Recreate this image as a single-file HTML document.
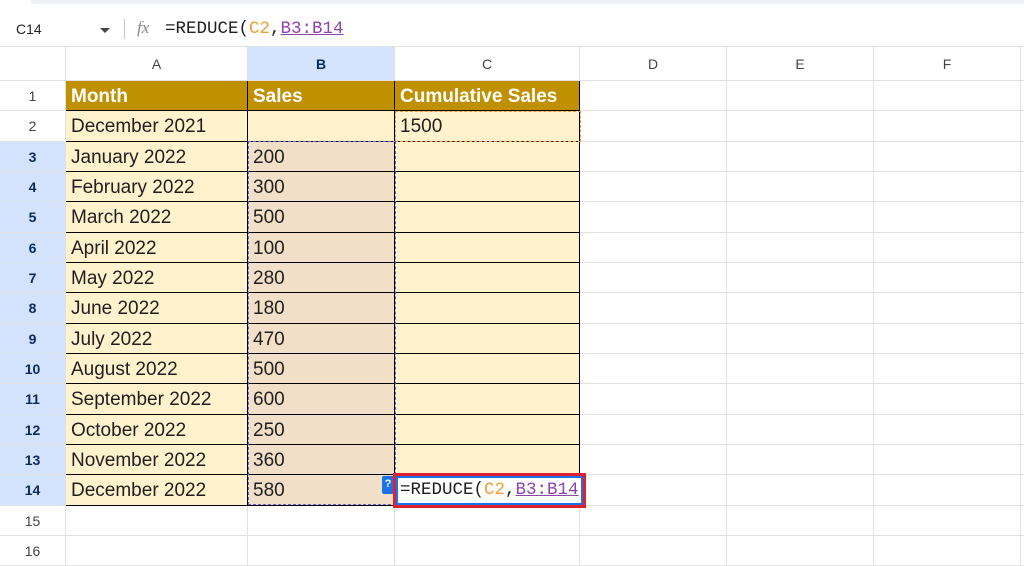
<!DOCTYPE html>
<html><head><meta charset="utf-8"><style>
body{margin:0;width:1024px;height:565px;overflow:hidden;background:#fff;font-family:"Liberation Sans",sans-serif;position:relative}
.topbar{position:absolute;left:30px;top:-8px;width:1000px;height:12px;background:#edf0f4;border-radius:8px}
.fb{position:absolute;top:14px;left:0;width:1024px;height:32px;border-bottom:1px solid #c7c7c7}
table{position:absolute;left:-1px;top:46px;border-collapse:collapse;table-layout:fixed;width:1034px}
td{border:1px solid #e1e1e1;padding:2px 0 0 5px;font-size:19px;color:#1f1f1f;white-space:nowrap;overflow:hidden}
td.rh{text-align:center;padding:0;font-size:14px;color:#444;background:#fff}
td.rh.s{background:#d3e3fd;font-weight:bold;color:#0b2a5c}
tr.ch td{text-align:center;padding:0;font-size:14px;color:#444;background:#fff}
tr.ch td.s{background:#d3e3fd;font-weight:bold;color:#0b2a5c}
td.d{border:1px solid #000;background:#fff2cc}
td.b{background:#f2dfc7}
td.h{background:#bf9000;color:#fff;font-weight:bold}
.mono{font-family:"Liberation Mono",monospace;font-size:17.5px;color:#1f1f1f}
</style></head><body>
<div class="topbar"></div>
<div class="fb">
<span style="position:absolute;left:16px;top:7px;font-size:14px;color:#1f1f1f">C14</span>
<span style="position:absolute;left:100px;top:14px;width:0;height:0;border-left:5px solid transparent;border-right:5px solid transparent;border-top:5px solid #444"></span>
<span style="position:absolute;left:124px;top:5px;width:1px;height:20px;background:#c7c7c7"></span>
<span style="position:absolute;left:137px;top:4px;font-size:17px;font-style:italic;font-family:'Liberation Serif',serif;color:#888">fx</span>
<span class="mono" style="position:absolute;left:165px;top:5px">=REDUCE(<span style="color:#f39c32">C2</span>,<span style="color:#8e44ad;text-decoration:underline">B3:B14</span></span>
</div>
<table>
<colgroup><col style="width:66px"><col style="width:182px"><col style="width:147px"><col style="width:185px"><col style="width:147px"><col style="width:147px"><col style="width:147px"><col style="width:13px"></colgroup>
<tr class="ch" style="height:34px"><td></td><td>A</td><td class="s">B</td><td>C</td><td>D</td><td>E</td><td>F</td><td></td></tr>
<tr style="height:30px"><td class="rh">1</td><td class="d h">Month</td><td class="d h">Sales</td><td class="d h">Cumulative Sales</td><td></td><td></td><td></td><td></td></tr>
<tr style="height:31px"><td class="rh">2</td><td class="d">December 2021</td><td class="d"></td><td class="d">1500</td><td></td><td></td><td></td><td></td></tr>
<tr style="height:30px"><td class="rh s">3</td><td class="d">January 2022</td><td class="d b">200</td><td class="d"></td><td></td><td></td><td></td><td></td></tr>
<tr style="height:30px"><td class="rh s">4</td><td class="d">February 2022</td><td class="d b">300</td><td class="d"></td><td></td><td></td><td></td><td></td></tr>
<tr style="height:31px"><td class="rh s">5</td><td class="d">March 2022</td><td class="d b">500</td><td class="d"></td><td></td><td></td><td></td><td></td></tr>
<tr style="height:30px"><td class="rh s">6</td><td class="d">April 2022</td><td class="d b">100</td><td class="d"></td><td></td><td></td><td></td><td></td></tr>
<tr style="height:30px"><td class="rh s">7</td><td class="d">May 2022</td><td class="d b">280</td><td class="d"></td><td></td><td></td><td></td><td></td></tr>
<tr style="height:31px"><td class="rh s">8</td><td class="d">June 2022</td><td class="d b">180</td><td class="d"></td><td></td><td></td><td></td><td></td></tr>
<tr style="height:30px"><td class="rh s">9</td><td class="d">July 2022</td><td class="d b">470</td><td class="d"></td><td></td><td></td><td></td><td></td></tr>
<tr style="height:30px"><td class="rh s">10</td><td class="d">August 2022</td><td class="d b">500</td><td class="d"></td><td></td><td></td><td></td><td></td></tr>
<tr style="height:31px"><td class="rh s">11</td><td class="d">September 2022</td><td class="d b">600</td><td class="d"></td><td></td><td></td><td></td><td></td></tr>
<tr style="height:30px"><td class="rh s">12</td><td class="d">October 2022</td><td class="d b">250</td><td class="d"></td><td></td><td></td><td></td><td></td></tr>
<tr style="height:30px"><td class="rh s">13</td><td class="d">November 2022</td><td class="d b">360</td><td class="d"></td><td></td><td></td><td></td><td></td></tr>
<tr style="height:31px"><td class="rh s">14</td><td class="d">December 2022</td><td class="d b">580</td><td class="d"></td><td></td><td></td><td></td><td></td></tr>
<tr style="height:30px"><td class="rh">15</td><td></td><td></td><td></td><td></td><td></td><td></td><td></td></tr>
<tr style="height:30px"><td class="rh">16</td><td></td><td></td><td></td><td></td><td></td><td></td><td></td></tr>
</table>
<div style="position:absolute;left:395px;top:111px;width:186px;height:31px;border:1px dashed #f39c32;box-sizing:border-box"></div>
<div style="position:absolute;left:248px;top:141px;width:148px;height:364px;border:1px dashed #6a5acd;box-sizing:border-box"></div>
<div style="position:absolute;left:382px;top:476px;width:12px;height:18px;background:#1a73e8;border-radius:2px;color:#fff;font-size:11px;font-weight:bold;text-align:center;line-height:16px">?</div>
<div style="position:absolute;left:393px;top:473px;width:193px;height:35px;border:3px solid #e0202e;box-sizing:border-box;background:#fff">
<div style="position:absolute;left:0;top:0;right:0;bottom:0;border:2px solid #1a73e8"></div>
<span class="mono" style="position:absolute;left:4px;top:4px">=REDUCE(<span style="color:#f39c32">C2</span>,<span style="color:#8e44ad;text-decoration:underline">B3:B14</span></span>
</div>
</body></html>
